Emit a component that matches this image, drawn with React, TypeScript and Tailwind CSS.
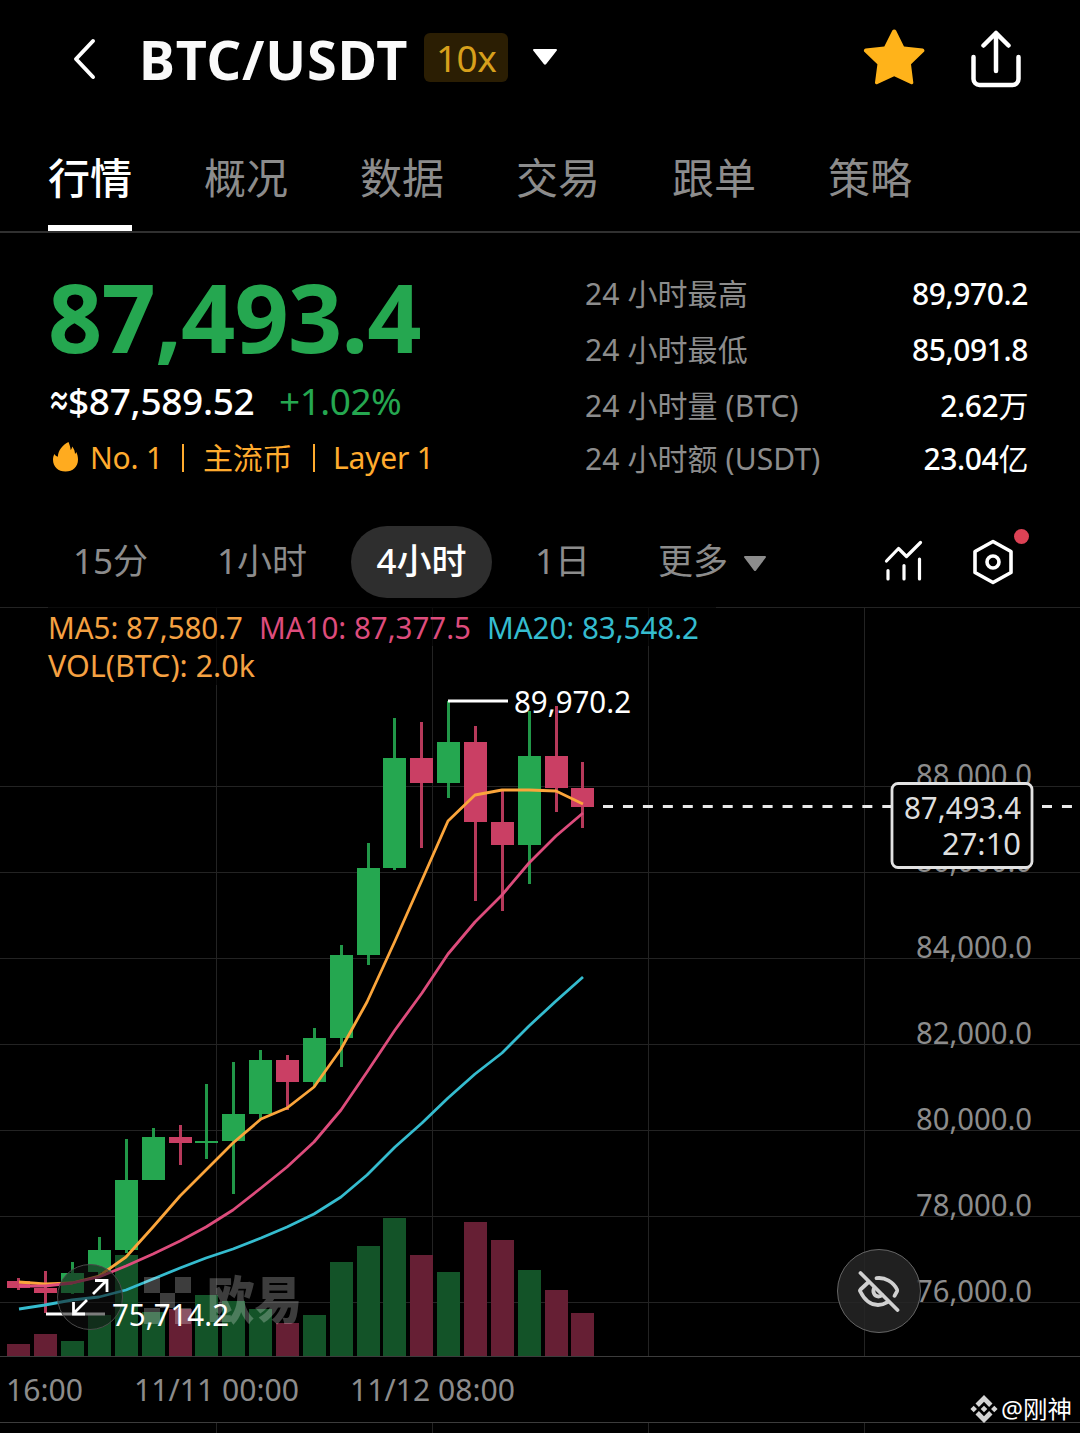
import type { ReactNode } from "react";

const UP = "#25a750";
const DOWN = "#ca3f64";
const GRID = "#232323";

const TABS = ["行情", "概况", "数据", "交易", "跟单", "策略"];

const STATS = [
  { label: "24 小时最高", value: "89,970.2", unit: "" },
  { label: "24 小时最低", value: "85,091.8", unit: "" },
  { label: "24 小时量 (BTC)", value: "2.62", unit: "万" },
  { label: "24 小时额 (USDT)", value: "23.04", unit: "亿" },
];

// x, up, body top, body bottom, wick top, wick bottom, volume top
type Candle = [number, boolean, number, number, number, number, number];

const CANDLES: Candle[] = [
  [7, false, 1281, 1288, 1278, 1290, 1344],
  [34, false, 1288, 1293, 1271, 1313, 1334],
  [61, true, 1273, 1293, 1262, 1294, 1341],
  [88, true, 1250, 1272, 1237, 1275, 1315],
  [115, true, 1180, 1250, 1139, 1253, 1255],
  [142, true, 1137, 1180, 1128, 1180, 1312],
  [169, false, 1137, 1143, 1125, 1165, 1309],
  [195, true, 1141, 1143, 1084, 1159, 1295],
  [222, true, 1114, 1141, 1062, 1194, 1301],
  [249, true, 1060, 1114, 1050, 1119, 1309],
  [276, false, 1060, 1082, 1055, 1110, 1323],
  [303, true, 1038, 1082, 1028, 1087, 1315],
  [330, true, 955, 1038, 945, 1067, 1262],
  [357, true, 868, 955, 843, 965, 1246],
  [383, true, 758, 868, 718, 870, 1218],
  [410, false, 758, 783, 722, 848, 1255],
  [437, true, 742, 783, 701, 798, 1272],
  [464, false, 742, 822, 726, 901, 1222],
  [491, false, 822, 845, 790, 911, 1240],
  [518, true, 756, 845, 711, 884, 1270],
  [545, false, 756, 788, 706, 812, 1290],
  [571, false, 788, 807, 762, 828, 1313],
];

const MA5 =
  "19,1282 45,1284 72,1283 99,1276 126,1257 153,1227 180,1196 206,1170 233,1143 261,1119 287,1108 314,1087 341,1049 367,1002 395,941 422,880 448,821 475,795 502,790 529,790 556,791 583,804";
const MA10 =
  "19,1286 45,1286 72,1283 99,1277 126,1266 153,1254 180,1241 206,1227 233,1210 261,1188 287,1167 314,1142 341,1110 367,1072 395,1030 422,993 448,954 475,922 502,895 529,863 556,836 583,813";
const MA20 =
  "19,1309 45,1305 72,1300 99,1297 126,1290 153,1279 180,1268 206,1258 233,1249 261,1238 287,1227 314,1214 341,1197 367,1175 395,1147 422,1123 448,1098 475,1074 502,1053 529,1026 556,1001 583,977";

const PRICES = [88, 86, 84, 82, 80, 78, 76];

interface LabelProps {
  x: number;
  y: number;
  w: number;
  fill: string;
  size?: number;
  children: ReactNode;
}

function Label({ x, y, w, fill, size = 31, children }: LabelProps) {
  return (
    <text x={x} y={y} fill={fill} fontSize={size} textLength={w} lengthAdjust="spacingAndGlyphs">
      {children}
    </text>
  );
}

function Header() {
  return (
    <header className="flex h-[118px] items-center pl-[72px] pr-[58px]">
      <svg width="24" height="44" viewBox="0 0 24 44" fill="none" stroke="#fff" strokeWidth="4" strokeLinecap="round" strokeLinejoin="round">
        <path d="M21 4 4 22l17 18" />
      </svg>
      <h1 className="ml-[43px] text-[54px] leading-[60px] font-bold tracking-[0.800px] whitespace-nowrap text-neutral-50">
        BTC/USDT
      </h1>
      <span className="mt-[-3px] ml-[16px] flex h-[49px] w-[84px] items-center justify-center rounded-md bg-[#2b1e03] text-[37px] tracking-[-0.500px] text-[#d7a01c]">
        10x
      </span>
      <svg className="mt-[-4px] ml-[24px]" width="26" height="18" viewBox="0 0 26 18" fill="#fff">
        <path d="M2 1h22a1 1 0 0 1 .8 1.6L14.2 16a1.5 1.5 0 0 1-2.4 0L1.2 2.6A1 1 0 0 1 2 1Z" />
      </svg>
      <svg className="mt-[-5px] ml-auto" width="62" height="58" viewBox="0 0 62 58" fill="#ffb31a">
        <path d="M29.300 2.500a2.200 2.200 0 0 1 3.800 0L41 18.500l18.700 2.100a2 2 0 0 1 1 3.500L48 36.200l2.300 18.200a1.700 1.700 0 0 1-2.500 1.700L31.200 48.200 14.500 56.100a1.700 1.700 0 0 1-2.500-1.700l2.400-18.200L1.600 24.100a2 2 0 0 1 1-3.500l18.700-2.100Z" />
      </svg>
      <svg className="ml-[45px]" width="52" height="60" viewBox="0 0 52 60" fill="none" stroke="#fff" strokeWidth="4.500" strokeLinecap="round" strokeLinejoin="round">
        <path d="M3.500 28v22a6 6 0 0 0 6 6h33a6 6 0 0 0 6-6V28M26 42V4M13.500 16.500 26 4l12.500 12.500" />
      </svg>
    </header>
  );
}

function Tabs() {
  return (
    <nav className="flex h-[115px] gap-[72px] border-b-2 border-[#303030] px-12 text-[42px] leading-[60px]">
      {TABS.map((tab, i) => (
        <div
          key={tab}
          className={
            i === 0
              ? "h-[113px] border-b-6 border-white pt-[30px] font-medium text-white"
              : "pt-[30px] text-[#8c8c8c]"
          }
        >
          {tab}
        </div>
      ))}
    </nav>
  );
}

function Summary() {
  return (
    <section className="flex h-[285px] justify-between pt-8 pr-[52px] pl-12">
      <div>
        <div className="mt-[-1px] h-[104px] text-[95px] leading-[104px] font-bold tracking-[-0.900px] text-[#25a750]">
          87,493.4
        </div>
        <div className="mt-[9px] flex text-[37px] leading-[48px]">
          <span className="w-[20px] origin-left scale-x-[0.600] font-bold text-white">≈</span>
          <span className="w-[211px] font-medium tracking-[-0.300px] text-white">$87,589.52</span>
          <span className="tracking-[-0.500px] text-[#25a750]">+1.02%</span>
        </div>
        <div className="mt-[11px] flex items-center text-[30px] leading-[44px] tracking-[-0.200px] text-[#ffab2e]">
          <svg className="mt-[-3px] mr-[12px] ml-[5px]" width="25" height="30" viewBox="0 0 25 30" fill="#ffab1f">
            <path d="M15.500 0c1 2.800 2 5 2.200 8 .8-1 1.300-2 1.500-3.500 2 2.500 2.800 5 2.800 7.500.7-.6 1-1.200 1.300-2 1.200 2.500 1.700 5 1.700 7.500C25 25 19.800 29.500 12.500 29.500S0 25 0 17.500C0 15.500.5 13.500 1.500 12c.7 1.400 1.700 2.200 3.300 2.800C5.500 8 9 3.500 15.500 0Z" />
          </svg>
          <span className="w-[92px]">No. 1</span>
          <i className="h-7 w-[2px] bg-[#ffab2e]" />
          <span className="ml-[19px] w-[110px]">主流币</span>
          <i className="h-7 w-[2px] bg-[#ffab2e]" />
          <span className="ml-[18px]">Layer 1</span>
        </div>
      </div>
      <dl className="flex w-[443px] flex-col pt-[7px] text-[30px] leading-[44px]">
        {STATS.map((s, i) => (
          <div key={s.label} className={i < 2 ? "flex h-[56px] justify-between" : "flex h-[53px] justify-between"}>
            <dt className="tracking-[0.100px] text-[#8c8c8c]">{s.label}</dt>
            <dd className="font-medium tracking-[-0.400px] text-white">
              {s.value}
              <span className="font-normal">{s.unit}</span>
            </dd>
          </div>
        ))}
      </dl>
    </section>
  );
}

function Intervals() {
  return (
    <div className="flex h-[89px] items-start pt-2 text-[35px] leading-[70px] text-[#8c8c8c]">
      <span className="ml-[73px] w-[144px]">15分</span>
      <span className="w-[134px]">1小时</span>
      <span className="h-[72px] w-[141px] rounded-full bg-[#2e2e2e] text-center font-medium text-white">
        4小时
      </span>
      <span className="ml-[43px] w-[123px]">1日</span>
      <span>更多</span>
      <svg className="mt-[29px] ml-[15px]" width="24" height="18" viewBox="0 0 24 18" fill="#8c8c8c">
        <path d="M2 1h20a1 1 0 0 1 .8 1.600L13 15.500a1.300 1.300 0 0 1-2 0L1.200 2.600A1 1 0 0 1 2 1Z" />
      </svg>
      <svg className="mt-[14px] ml-auto" width="40" height="42" viewBox="0 0 40 42" fill="none" stroke="#fff" strokeWidth="3.200" strokeLinecap="round" strokeLinejoin="round">
        <path d="M2.500 21 14.500 8.500l8 8L36.500 2.500M4 30.500V39M20 25.500V39M35.500 19V39" />
      </svg>
      <div className="relative mt-[13px] mr-[66px] ml-[48px]">
        <svg width="42" height="46" viewBox="0 0 42 46" fill="none" stroke="#fff" strokeWidth="3.600" strokeLinejoin="round">
          <path d="M21 2.500 39 12.500v21L21 43.500 3 33.500v-21Z" />
          <circle cx="21" cy="23" r="6" />
        </svg>
        <i className="absolute top-[-10px] right-[-15px] size-[15px] rounded-full bg-[#dc4255]" />
      </div>
    </div>
  );
}

function Chart() {
  return (
    <section className="relative h-[826px]">
      <svg width="1080" height="826" viewBox="0 607 1080 826" className="block">
        {/* grid */}
        <g stroke={GRID} strokeWidth="1">
          {[216.5, 432.5, 648.5, 864.5].map((x) => (
            <path key={x} d={`M${x} 607V1356M${x} 1423V1433`} />
          ))}
          {[607.5, 786.5, 872.5, 958.5, 1044.5, 1130.5, 1216.5, 1302.5].map((y) => (
            <path key={y} d={`M0 ${y}H1080`} />
          ))}
        </g>
        <path d="M0 1356.5H1080M0 1422.5H1080" stroke="#3c3c3c" />

        {/* volume */}
        {CANDLES.map(([x, up, , , , , v]) => (
          <rect key={x} x={x} y={v} width="23" height={1356 - v} fill={up ? "#135328" : "#661f34"} />
        ))}

        {/* candles */}
        {CANDLES.map(([x, up, top, bottom, high, low]) => (
          <g key={x} fill={up ? UP : DOWN}>
            <rect x={x + 10} y={high} width="3" height={low - high} opacity="0.9" />
            <rect x={x} y={top} width="23" height={bottom - top} />
          </g>
        ))}

        <g fill="none" strokeWidth="2.800" strokeLinejoin="round">
          <polyline points={MA5} stroke="#fba53b" />
          <polyline points={MA10} stroke="#dd4c7c" />
          <polyline points={MA20} stroke="#35bccf" />
        </g>

        {/* watermark */}
        <g fill="#fff" opacity="0.24">
          <path d="M144 1277h16v16h-16zM175 1277h16v16h-16zM160 1293h15v15h-15zM144 1308h16v16h-16zM175 1308h16v16h-16z" />
          <text x="207" y="1319" fontSize="51" fontWeight="900" textLength="95" lengthAdjust="spacingAndGlyphs">
            欧易
          </text>
        </g>

        {/* indicator legend */}
        <rect x="48" y="607" width="668" height="39" fill="#000" opacity="0.65" />
        <rect x="48" y="646" width="210" height="39" fill="#000" opacity="0.65" />
        <Label x={48} y={639} w={195} fill="#f5a142">MA5: 87,580.7</Label>
        <Label x={259} y={639} w={212} fill="#dd4c7c">MA10: 87,377.5</Label>
        <Label x={487} y={639} w={212} fill="#35bccf">MA20: 83,548.2</Label>
        <Label x={48} y={677} w={207} fill="#f5a142">VOL(BTC): 2.0k</Label>

        {/* price scale */}
        {PRICES.map((p, i) => (
          <Label key={p} x={916} y={786 + i * 86} w={116} fill="#8c8c8c">
            {p},000.0
          </Label>
        ))}

        {/* high and low marks */}
        <path d="M448 701H508M46 1314H105" stroke="#fff" strokeWidth="3" />
        <Label x={514} y={713} w={117} fill="#fff">89,970.2</Label>

        {/* last price */}
        <path d="M603 806.500H891M1042 806.500H1072" stroke="#e8e8e8" strokeWidth="3" strokeDasharray="10 9.950" />
        <rect x="892" y="783.500" width="140" height="84" rx="6" fill="#000" stroke="#e2e2e2" strokeWidth="2.800" />
        <Label x={904} y={819} w={117} fill="#dedede">87,493.4</Label>
        <Label x={942} y={855} w={79} fill="#dedede">27:10</Label>

        {/* time scale */}
        <Label x={6} y={1401} w={77} fill="#8c8c8c">16:00</Label>
        <Label x={134} y={1401} w={165} fill="#8c8c8c">11/11 00:00</Label>
        <Label x={350} y={1401} w={165} fill="#8c8c8c">11/12 08:00</Label>

        {/* fullscreen toggle */}
        <circle cx="90" cy="1297" r="32.500" fill="#111" fillOpacity="0.55" stroke="#4a4a4a" />
        <path d="M93 1294 107 1280M95 1280.500H107V1292M87 1300 73 1314M73.500 1302V1314H85" fill="none" stroke="#fff" strokeWidth="2.800" />
        <Label x={112} y={1326} w={117} fill="#fff">75,714.2</Label>

        {/* source mark */}
        <g fill="#d4d4d4">
          <path d="m984 1395 8.500 8.500-3.400 3.400-5.100-5.100-5.100 5.100-3.400-3.400ZM984 1423l8.500-8.500-3.400-3.400-5.100 5.100-5.100-5.100-3.400 3.400ZM984 1405.700l3.300 3.300-3.300 3.300-3.300-3.300ZM973.700 1405.700l3.300 3.300-3.300 3.300-3.300-3.300ZM994.300 1405.700l3.300 3.300-3.300 3.300-3.300-3.300Z" />
        </g>
        <Label x={1001} y={1418} w={71} size={24} fill="#fff">@刚神</Label>
      </svg>

      <button
        type="button"
        className="absolute top-[642px] left-[837px] flex size-[84px] items-center justify-center rounded-full border border-[#666] bg-[#262626]/85"
      >
        <svg width="42" height="42" viewBox="0 0 42 42" fill="none" stroke="#d0d0d0" strokeWidth="3.800" strokeLinecap="round" strokeLinejoin="round">
          <path d="M2.500 3 39.500 40" />
          <path d="M10 12.500 2.500 19.500c-.6.6-.6 1.400-.2 2C6.500 30 12.500 35 20 35c3.500 0 6.500-1 9.500-2.800" />
          <path d="M18.500 8.200C27 7 35.500 12 39 19.500c.3.700.3 1.200 0 1.800l-2.500 4.500" />
          <path d="M16.500 17.500c-2.500 3.500-.5 9 4 9 1.500 0 2.700-.5 3.700-1.500" />
        </svg>
      </button>
    </section>
  );
}

export default function App() {
  return (
    <main className="h-[1433px] w-[1080px] overflow-hidden bg-black font-['Noto_Sans','Noto_Sans_CJK_SC',sans-serif]">
      <Header />
      <Tabs />
      <Summary />
      <Intervals />
      <Chart />
    </main>
  );
}
